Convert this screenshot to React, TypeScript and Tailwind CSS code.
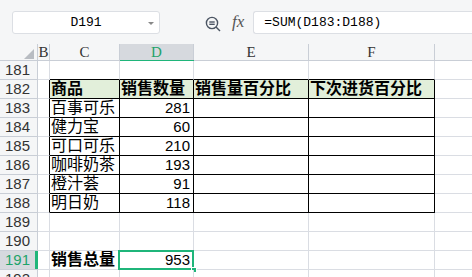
import React from "react";

const FONT = { fontFamily: '"Liberation Sans", "Noto Sans CJK SC", sans-serif' };
const MONO = { fontFamily: '"Liberation Mono", "Noto Sans CJK SC", monospace' };
const SERIF = { fontFamily: '"Liberation Serif", serif' };

type Row = { n: number; c?: string; d?: string; e?: string; f?: string; kind?: "head" | "data" | "total" };

const ROWS: Row[] = [
  { n: 181 },
  { n: 182, c: "商品", d: "销售数量", e: "销售量百分比", f: "下次进货百分比", kind: "head" },
  { n: 183, c: "百事可乐", d: "281", kind: "data" },
  { n: 184, c: "健力宝", d: "60", kind: "data" },
  { n: 185, c: "可口可乐", d: "210", kind: "data" },
  { n: 186, c: "咖啡奶茶", d: "193", kind: "data" },
  { n: 187, c: "橙汁荟", d: "91", kind: "data" },
  { n: 188, c: "明日奶", d: "118", kind: "data" },
  { n: 189 },
  { n: 190 },
  { n: 191, c: "销售总量", d: "953", kind: "total" },
  { n: 192 },
];

function SearchIcon() {
  return (
    <svg width="18" height="16" viewBox="0 0 18 16" fill="none" stroke="#4b5563" strokeWidth="1.4">
      <circle cx="7" cy="7" r="5.6" />
      <line x1="4.3" y1="6" x2="9.7" y2="6" />
      <line x1="4.3" y1="8.3" x2="9.7" y2="8.3" />
      <line x1="11" y1="11" x2="15" y2="15" />
    </svg>
  );
}

function SheetRow({ row }: { row: Row }) {
  const inTable = row.kind === "head" || row.kind === "data";
  const above = row.n === 181;
  const selected = row.n === 191;
  const tb = inTable ? "border-black" : "border-[#dadde3]";
  const bottomEdge = inTable || above ? "border-b-black" : "border-b-[#dadde3]";
  const headBg = row.kind === "head" ? "bg-[#e2efda]" : "bg-white";
  const boldC = row.kind === "head" || row.kind === "total" ? "font-bold" : "";
  const bold = row.kind === "head" ? "font-bold" : "";

  return (
    <div className="flex h-[19px] shrink-0 text-[16px] leading-[18px] text-black">
      <div
        className={`relative flex w-[38px] shrink-0 items-center justify-center border-r border-b border-[#c9ced6] pr-[2px] text-[15px] ${
          selected ? "bg-[#d6d9de] text-[#1fa36a]" : "bg-[#f5f6f7] text-[#333]"
        }`}
        style={FONT}
      >
        {row.n}
        {selected && <div className="absolute top-0 right-[-1px] bottom-0 w-[3px] bg-[#1fb57a]" />}
      </div>
      <div className={`w-[12px] shrink-0 border-r border-b border-b-[#dadde3] ${inTable ? "border-r-black" : "border-r-[#dadde3]"}`} />
      <div className={`w-[70px] shrink-0 overflow-hidden whitespace-nowrap border-r border-b pl-[1px] ${tb} ${bottomEdge} ${headBg} ${boldC}`} style={FONT}>
        {row.c}
      </div>
      <div className={`relative w-[74px] shrink-0 whitespace-nowrap border-r border-b pr-[3px] ${tb} ${bottomEdge} ${headBg} ${bold} ${row.kind === "head" ? "pl-[1px] text-left" : "text-right"}`} style={FONT}>
        {row.kind === "head" ? row.d : <span className="text-[15px]">{row.d}</span>}
        {selected && (
          <>
            <div className="absolute top-[-1px] left-[-2px] right-[-1px] bottom-[-1px] border-2 border-[#1fb57a]" />
            <div className="absolute right-[-4px] bottom-[-4px] h-[6px] w-[6px] border border-white bg-[#1fb57a]" />
          </>
        )}
      </div>
      <div className={`w-[115px] shrink-0 whitespace-nowrap border-r border-b pl-[1px] ${tb} ${bottomEdge} ${headBg} ${bold}`} style={FONT}>
        {row.e}
      </div>
      <div className={`w-[126px] shrink-0 whitespace-nowrap border-r border-b pl-[1px] ${tb} ${bottomEdge} ${headBg} ${bold}`} style={FONT}>
        {row.f}
      </div>
      <div className="flex-1 border-b border-[#dadde3] bg-white" />
    </div>
  );
}

export default function App() {
  return (
    <div className="flex h-[277px] w-[472px] flex-col overflow-hidden bg-white">
      {/* formula bar */}
      <div className="flex h-[44px] shrink-0 items-start bg-[#f5f6f7] pt-[11px] pl-[12px]">
        <div className="relative flex h-[23px] w-[148px] items-center justify-center rounded-[3px] border border-[#dcdfe4] bg-white text-[13px] text-black" style={MONO}>
          D191
          <div className="absolute top-[10px] right-[5px] h-0 w-0 border-x-[3px] border-t-[3px] border-x-transparent border-t-[#888]" />
        </div>
        <div className="ml-[45px] mt-[5px]">
          <SearchIcon />
        </div>
        <div className="ml-[9px] mt-[2px] text-[17px] italic leading-[18px] text-[#555]" style={SERIF}>
          fx
        </div>
        <div className="ml-[9px] flex h-[23px] flex-1 items-center rounded-l-[3px] border border-r-0 border-[#dcdfe4] bg-white pl-[10px] text-[13px] text-black" style={MONO}>
          =SUM(D183:D188)
        </div>
      </div>

      {/* column headers */}
      <div className="flex h-[17px] shrink-0 border-b border-[#c9ced6] bg-[#f5f6f7] text-[15px] leading-[16px] text-[#333]" style={SERIF}>
        <div className="relative w-[38px] shrink-0 border-r border-[#c9ced6]">
          <svg className="absolute top-[5px] left-[24px]" width="10" height="10" viewBox="0 0 10 10">
            <polygon points="10,0 10,10 0,10" fill="#b8bcc2" />
          </svg>
        </div>
        <div className="flex w-[12px] shrink-0 items-center justify-center border-r border-[#c9ced6]">B</div>
        <div className="flex w-[70px] shrink-0 items-center justify-center border-r border-[#c9ced6]">C</div>
        <div className="relative flex w-[74px] shrink-0 items-center justify-center border-r border-[#c9ced6] bg-[#d6d9de] text-[#1fa36a]">
          D
          <div className="absolute right-[-1px] bottom-[-2px] left-0 h-[2px] bg-[#1fb57a]" />
        </div>
        <div className="flex w-[115px] shrink-0 items-center justify-center border-r border-[#c9ced6]">E</div>
        <div className="flex w-[126px] shrink-0 items-center justify-center border-r border-[#c9ced6]">F</div>
        <div className="flex-1" />
      </div>

      {/* rows */}
      {ROWS.map((row) => (
        <SheetRow key={row.n} row={row} />
      ))}
    </div>
  );
}
